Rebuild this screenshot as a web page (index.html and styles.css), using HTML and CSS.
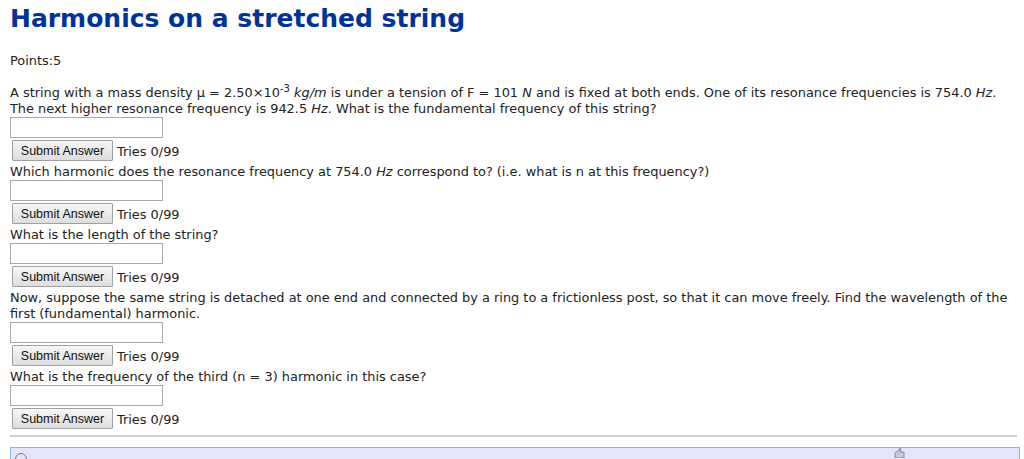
FILE: index.html
```html
<!DOCTYPE html>
<html>

<head>
    <title>Harmonics on a stretched string</title>
    <meta charset="UTF-8">
    <link rel="stylesheet" href="styles.css">
</head>

<body>
    <h1 class="title">Harmonics on a stretched string</h1>

    <p class="points">Points:5</p>

    <div class="problem">
        <div class="question">
            <div class="prompt">A string with a mass density &mu; = 2.50&times;10<sup>-3</sup> <i>kg/m</i> is under a tension of F = 101 <i>N</i> and is fixed at both ends. One of its resonance frequencies is 754.0 <i>Hz</i>. The next higher resonance frequency is 942.5 <i>Hz</i>. What is the fundamental frequency of this string?</div>
            <input type="text" class="answer">
            <div class="submitrow"><button class="submit">Submit Answer</button> <span class="tries">Tries 0/99</span></div>
        </div>

        <div class="question">
            <div class="prompt">Which harmonic does the resonance frequency at 754.0 <i>Hz</i> correspond to? (i.e. what is n at this frequency?)</div>
            <input type="text" class="answer">
            <div class="submitrow"><button class="submit">Submit Answer</button> <span class="tries">Tries 0/99</span></div>
        </div>

        <div class="question">
            <div class="prompt">What is the length of the string?</div>
            <input type="text" class="answer">
            <div class="submitrow"><button class="submit">Submit Answer</button> <span class="tries">Tries 0/99</span></div>
        </div>

        <div class="question">
            <div class="prompt">Now, suppose the same string is detached at one end and connected by a ring to a frictionless post, so that it can move freely. Find the wavelength of the first (fundamental) harmonic.</div>
            <input type="text" class="answer">
            <div class="submitrow"><button class="submit">Submit Answer</button> <span class="tries">Tries 0/99</span></div>
        </div>

        <div class="question">
            <div class="prompt">What is the frequency of the third (n = 3) harmonic in this case?</div>
            <input type="text" class="answer">
            <div class="submitrow"><button class="submit">Submit Answer</button> <span class="tries">Tries 0/99</span></div>
        </div>
    </div>

    <hr class="divider">

    <div class="helpbox">
        <span class="helpdot"></span>
        <svg class="helpicon" width="14" height="10" viewBox="0 0 14 10">
            <path d="M3 10 L3 5 L7 2 L8 0 L9 1 L8 4 L12 4 L12 10 Z" fill="#c8c8d8" stroke="#8888a0" stroke-width="1"/>
        </svg>
    </div>
</body></html>
```

FILE: styles.css
```css
* {
    box-sizing: border-box;
}

body {
    margin: 0;
    padding: 4px 2px 0 10px;
    font-family: 'DejaVu Sans', Verdana, sans-serif;
    font-size: 12.9px;
    color: #222;
    background: white;
    overflow: hidden;
}

.title {
    margin: 0;
    font-size: 25px;
    line-height: 30px;
    font-weight: bold;
    color: #003399;
}

.points {
    margin: 19px 0 16px 0;
    line-height: 16px;
}

.prompt {
    line-height: 16px;
}

.prompt sup {
    font-size: 10px;
    line-height: 0;
    vertical-align: 5px;
}

.answer {
    display: block;
    width: 153px;
    height: 21px;
    margin: 0;
    padding: 1px 3px;
    border: 1px solid #a9a9a9;
    background: white;
    font-family: inherit;
    font-size: 12px;
}

.submitrow {
    display: flex;
    align-items: center;
    gap: 4px;
    margin: 2px 0 3px 2px;
    height: 21px;
}

.submit {
    height: 21px;
    width: 101px;
    padding: 0;
    margin: 0;
    border: 1px solid #a0a0a0;
    border-radius: 1px;
    background: linear-gradient(#f6f6f6, #dddddd);
    font-family: 'Liberation Sans', Arial, sans-serif;
    font-size: 12.5px;
    color: #111;
}

.tries {
    padding-top: 2px;
}

.divider {
    margin: 6px 0 0 0;
    width: 1007px;
    height: 2px;
    border: none;
    background: #cfcfcf;
}

.helpbox {
    position: relative;
    margin-top: 10px;
    width: 1010px;
    height: 40px;
    border: 1px solid #8fb3e8;
    background: #e4e4fa;
}

.helpdot {
    position: absolute;
    left: 4px;
    top: 5px;
    width: 12px;
    height: 12px;
    border: 1px solid #777;
    border-radius: 50%;
}

.helpicon {
    position: absolute;
    left: 881px;
    top: 0;
}
```
